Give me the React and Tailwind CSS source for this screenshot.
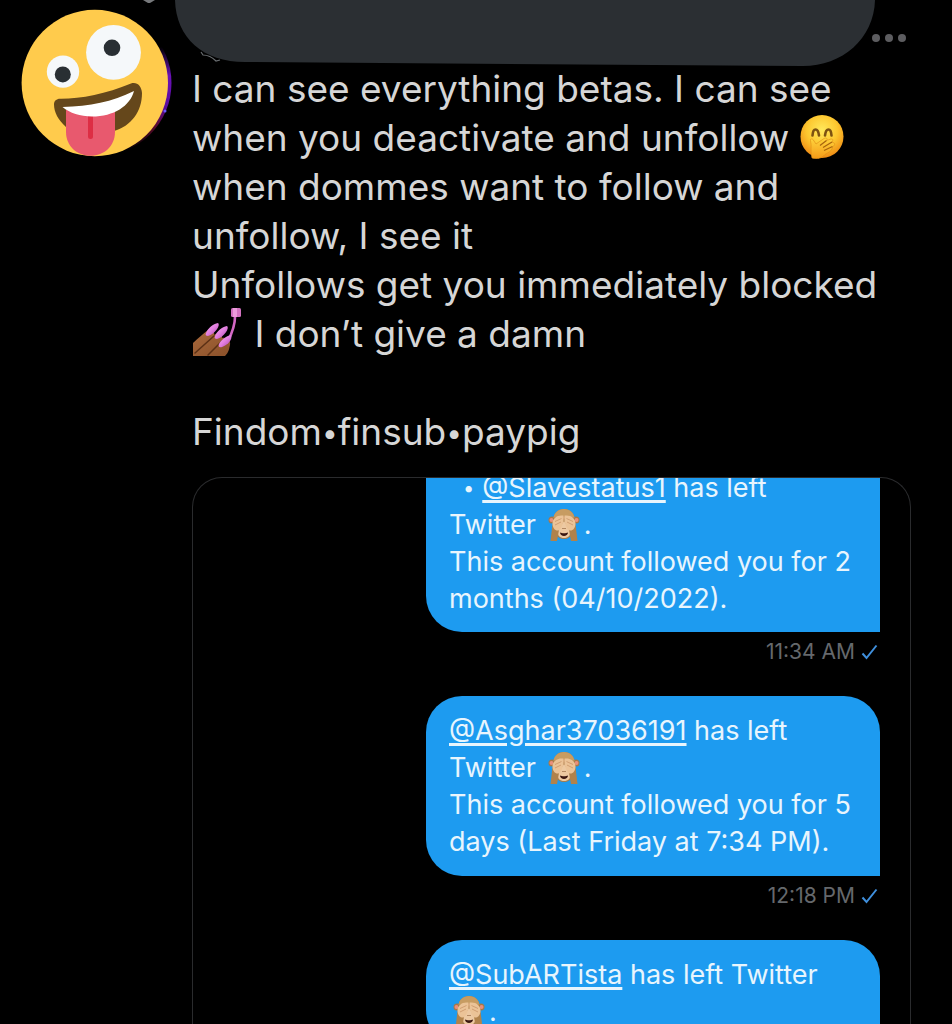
import React from 'react'

const messages = [
  {
    id: 1,
    handle: '@Slavestatus1',
    lead: ' has left Twitter ',
    details: 'This account followed you for 2 months (04/10/2022).',
    time: '11:34 AM',
    cut: true,
  },
  {
    id: 2,
    handle: '@Asghar37036191',
    lead: ' has left Twitter ',
    details: 'This account followed you for 5 days (Last Friday at 7:34 PM).',
    time: '12:18 PM',
  },
  {
    id: 3,
    handle: '@SubARTista',
    lead: ' has left Twitter ',
  },
]

const ZanyFace = () => (
  <svg viewBox="20 8 156 150" className="w-[156px] h-[150px]" role="img" aria-label="Avatar">
    <defs>
      <linearGradient id="rim" x1="0" y1="0" x2="0" y2="1">
        <stop offset="0.25" stopColor="#000" />
        <stop offset="0.45" stopColor="#6a12b8" />
        <stop offset="0.66" stopColor="#5a0ba0" />
        <stop offset="0.8" stopColor="#5a0b2c" />
        <stop offset="0.97" stopColor="#000" />
      </linearGradient>
    </defs>
    <circle cx="99" cy="83" r="72.500" fill="url(#rim)" />
    <circle cx="165" cy="111" r="1.5" fill="#6a5cff" />
    <circle cx="94.800" cy="83" r="73.200" fill="#ffcb4c" />
    <circle cx="63" cy="71.600" r="16.200" fill="#f5f8fa" />
    <circle cx="62.800" cy="74.400" r="8" fill="#292f33" />
    <circle cx="113.500" cy="52.400" r="27.400" fill="#f5f8fa" />
    <circle cx="112" cy="47.800" r="8.300" fill="#292f33" />
    <path
      d="M60 98.800C80 99 106 94 131 83.500C137 81.500 141.500 86 142 93C142 112 131 126 114 131L66 127C58 120 54 112 54 104.500C54 101 56.500 98.800 60 98.800Z"
      fill="#65471b"
    />
    <path
      d="M66 110H115V132C115 146 104 155.800 90.500 155.800C77 155.800 66 146 66 132Z"
      fill="#e8596e"
    />
    <path d="M88 114H93V136.500A2.500 2.500 0 0 1 88 136.500Z" fill="#dd2e44" />
    <path d="M62.500 107C90 106 112 102 134 91C130 106 114 116.500 92 116.500C80 116.500 70 113 62.500 107Z" fill="#fff" />
  </svg>
)

const GiggleFace = () => (
  <svg viewBox="0 0 44 44" className="inline-block w-11 h-11 -mt-2" role="img" aria-label="Face with hand over mouth">
    <defs>
      <radialGradient id="giggle" cx="0.5" cy="0.35" r="0.65">
        <stop offset="0" stopColor="#ffe95c" />
        <stop offset="0.55" stopColor="#fdc72f" />
        <stop offset="1" stopColor="#ee8a14" />
      </radialGradient>
      <linearGradient id="palm" x1="0" y1="0" x2="0" y2="1">
        <stop offset="0" stopColor="#ffd53e" />
        <stop offset="1" stopColor="#f59a17" />
      </linearGradient>
    </defs>
    <circle cx="22" cy="21.500" r="21.500" fill="url(#giggle)" />
    <path d="M12.500 20.500C13 12.500 18 12.500 19 20.500M25 20.500C26 12.500 31 12.500 31.500 20.500" fill="none" stroke="#7d5211" strokeWidth="2.600" strokeLinecap="round" />
    <path
      d="M12 43C10 36 12 31 10.500 25.500C10 23 13 23.500 14 26L16 29L24 23.500C26.500 22 28 24 26.500 25.500L31 24C33 23.500 33.500 25.500 32 27L34 28C35.500 29 34 31 32.500 32L32 34C31 36.500 28 37.500 25 39.500C22 43 17 45 12 43Z"
      fill="url(#palm)"
      stroke="#dd8c14"
      strokeWidth="0.600"
    />
    <path d="M26.500 25.500L20 30.500M32 27L23 32.500M32.500 31.500L24 35.500" stroke="#a8640d" strokeWidth="1.300" fill="none" />
  </svg>
)

const NailPolish = () => (
  <svg viewBox="0 0 50 50" className="inline-block w-[50px] h-[50px] -mt-[10px] mr-[2px]" role="img" aria-label="Nail polish">
    <defs>
      <linearGradient id="skin" x1="0" y1="0" x2="1" y2="1">
        <stop offset="0" stopColor="#a9693c" />
        <stop offset="1" stopColor="#8a5029" />
      </linearGradient>
      <linearGradient id="nail" x1="0" y1="0" x2="1" y2="1">
        <stop offset="0" stopColor="#f7aaf3" />
        <stop offset="0.500" stopColor="#e27fdf" />
        <stop offset="1" stopColor="#a83fa8" />
      </linearGradient>
    </defs>
    <path d="M1 36C6 31 11 27 16 23C20 22 23 25 22 28C26 25 31 27 30 31C35 30 39 34 38 38C37 42 37 45 33 49H1Z" fill="url(#skin)" />
    <path d="M3 46L22 29M16 48L30 34" stroke="#5b3015" strokeWidth="1.500" strokeLinecap="round" />
    <path d="M14 26C16 21 21 17 26 16C29 18 23 27 16 29C14 29 13 28 14 26Z" fill="url(#nail)" />
    <path d="M23 29C25 24 30 20 35 19C38 21 32 30 25 32C23 32 22 31 23 29Z" fill="url(#nail)" />
    <path d="M43 10C43 18 41 24 36 34" stroke="#d368c4" strokeWidth="2.600" fill="none" strokeLinecap="round" />
    <path d="M27 37C29 33 34 29 39 28C41 32 36 38 30 40C27 41 26 39 27 37Z" fill="url(#nail)" />
    <rect x="39" y="1" width="10" height="9" rx="1.500" fill="#d272c0" />
    <rect x="41" y="1" width="4" height="9" fill="#eb9bdb" />
  </svg>
)

const Monkey = () => (
  <svg viewBox="0 0 32 32" className="inline-block w-8 h-8 mx-1 -mt-1" role="img" aria-label="See-no-evil monkey">
    <circle cx="4" cy="11" r="3.500" fill="#a87846" />
    <circle cx="28" cy="11" r="3.500" fill="#a87846" />
    <circle cx="3.500" cy="11" r="2" fill="#ea8f7c" />
    <circle cx="28.500" cy="11" r="2" fill="#ea8f7c" />
    <path d="M16 0C23 0 27 5 27 13C27 22 24 30 16 30C8 30 5 22 5 13C5 5 9 0 16 0Z" fill="#a97c48" />
    <path d="M16 0C22 0 26 4 26.500 9C20 7 12 7 5.500 9C6 4 10 0 16 0Z" fill="#c79c62" />
    <path d="M16 12L22 21C23 27 20 29 16 29C12 29 9 27 10 21Z" fill="#edc9a2" />
    <path d="M14.500 19.500H15.500M16.500 19.500H17.500" stroke="#7a4a27" strokeWidth="1" />
    <path d="M12 23.500C14 24.500 18 24.500 20 23.500C20 28 12 28 12 23.500Z" fill="#3b1712" />
    <path d="M4.500 15L2.500 32H9L11 21Z" fill="#b0824c" />
    <path d="M27.500 15L29.500 32H23L21 21Z" fill="#b0824c" />
    <path d="M14.500 6.500C9 6 4.500 9.500 4.500 14.500C4.500 19 7 22 10.500 21.500C13 20 15.500 15 16 8.500C16 7 15.500 6.500 14.500 6.500Z" fill="#ebc397" />
    <path d="M17.500 6.500C23 6 27.500 9.500 27.500 14.500C27.500 19 25 22 21.500 21.500C19 20 16.500 15 16 8.500C16 7 16.500 6.500 17.500 6.500Z" fill="#ebc397" />
    <path d="M16 7V11M7 12.500L13.500 9.500M7 16L13 13M25 12.500L18.500 9.500M25 16L19 13" stroke="#c99468" strokeWidth="0.800" />
  </svg>
)

const Sent = () => (
  <svg viewBox="0 0 18 18" className="w-[18px] h-[18px]" fill="none" role="img" aria-label="Sent">
    <path d="M1.500 10.500L5.500 15L15.500 2.500" stroke="#3f8fdc" strokeWidth="2" />
  </svg>
)

const Bubble = ({ message }) => {
  const { handle, lead, details, time, cut } = message
  return (
    <li className="flex flex-col items-end shrink-0">
      <div
        className={
          cut
            ? 'w-[454px] -mt-[9px] rounded-bl-[36px] bg-[#1d9bf0] pl-[23px] pr-[21px] pb-[15px]'
            : 'w-[454px] rounded-l-[36px] rounded-tr-[36px] bg-[#1d9bf0] pl-[23px] pr-[21px] py-4'
        }
      >
        <p className="text-[27px] leading-[37px] text-[#e8f5fd]">
          {cut && <span className="ml-[14px] mr-2 text-xl leading-none align-[2px]">•</span>}
          <a href="#profile" className="underline decoration-[3px] underline-offset-[3px]">{handle}</a>
          {lead}
          <Monkey />.
        </p>
        {details && <p className="text-[27px] leading-[37px] text-[#e8f5fd]">{details}</p>}
      </div>
      {time && (
        <div className="flex items-center gap-[6px] h-10 mb-6 pr-px text-[21px] text-[#65686c]">
          <time>{time}</time>
          <Sent />
        </div>
      )}
    </li>
  )
}

export const Tweet = () => {
  return (
    <article className="relative h-screen overflow-hidden flex bg-black font-['Inter',sans-serif]">
      {/* Avatar column */}
      <div className="w-48 shrink-0 pl-5 pt-2">
        <ZanyFace />
      </div>
      <svg viewBox="0 0 12 4" className="absolute top-0 left-[143px] w-3 h-1" aria-hidden="true">
        <path d="M0 0H12L7 3H5Z" fill="#77797c" />
      </svg>

      <div className="flex-1 min-w-0 flex flex-col pr-[41px]">
        {/* Name row, covered by the marker */}
        <header className="relative h-16 shrink-0 flex justify-end items-center">
          <svg viewBox="0 0 700 66" preserveAspectRatio="none" className="absolute top-0 -left-[17px] w-[calc(100%-19px)] h-[66px]" aria-hidden="true">
            <path d="M0 0H700C699 39 667 66 628 66L70 62C28 62 1 38 0 0Z" fill="#2b2f33" />
            <path d="M26 52L28 55C34 55 38 58 41 61L45 60" fill="none" stroke="#6b6f72" strokeWidth="1.200" />
          </svg>
          <button type="button" aria-label="More" className="flex gap-[5px] mt-3 mr-[5px] z-10">
            <span className="size-2 rounded-full bg-[#5d5d60]"></span>
            <span className="size-2 rounded-full bg-[#5d5d60]"></span>
            <span className="size-2 rounded-full bg-[#5d5d60]"></span>
          </button>
        </header>

        <div className="pr-6 text-[37px] leading-[49px] text-[#d6d6d6]">
          <p>
            I can see everything betas. I can see when you deactivate and unfollow <GiggleFace /> when
            dommes want to follow and unfollow, I see it
          </p>
          <p>
            Unfollows get you immediately blocked <NailPolish /> I don’t give a damn
          </p>
          <p className="mt-[49px]">
            Findom<span className="text-[28px] leading-none align-[2px]">•</span>finsub<span className="text-[28px] leading-none align-[2px]">•</span>paypig
          </p>
        </div>

        {/* Attached screenshot */}
        <ul className="mt-[21px] flex-1 min-h-0 overflow-hidden flex flex-col rounded-t-[30px] border border-b-0 border-[#2a2b2d] pr-[30px]">
          {messages.map((message) => (
            <Bubble key={message.id} message={message} />
          ))}
        </ul>
      </div>
    </article>
  )
}

export default Tweet
